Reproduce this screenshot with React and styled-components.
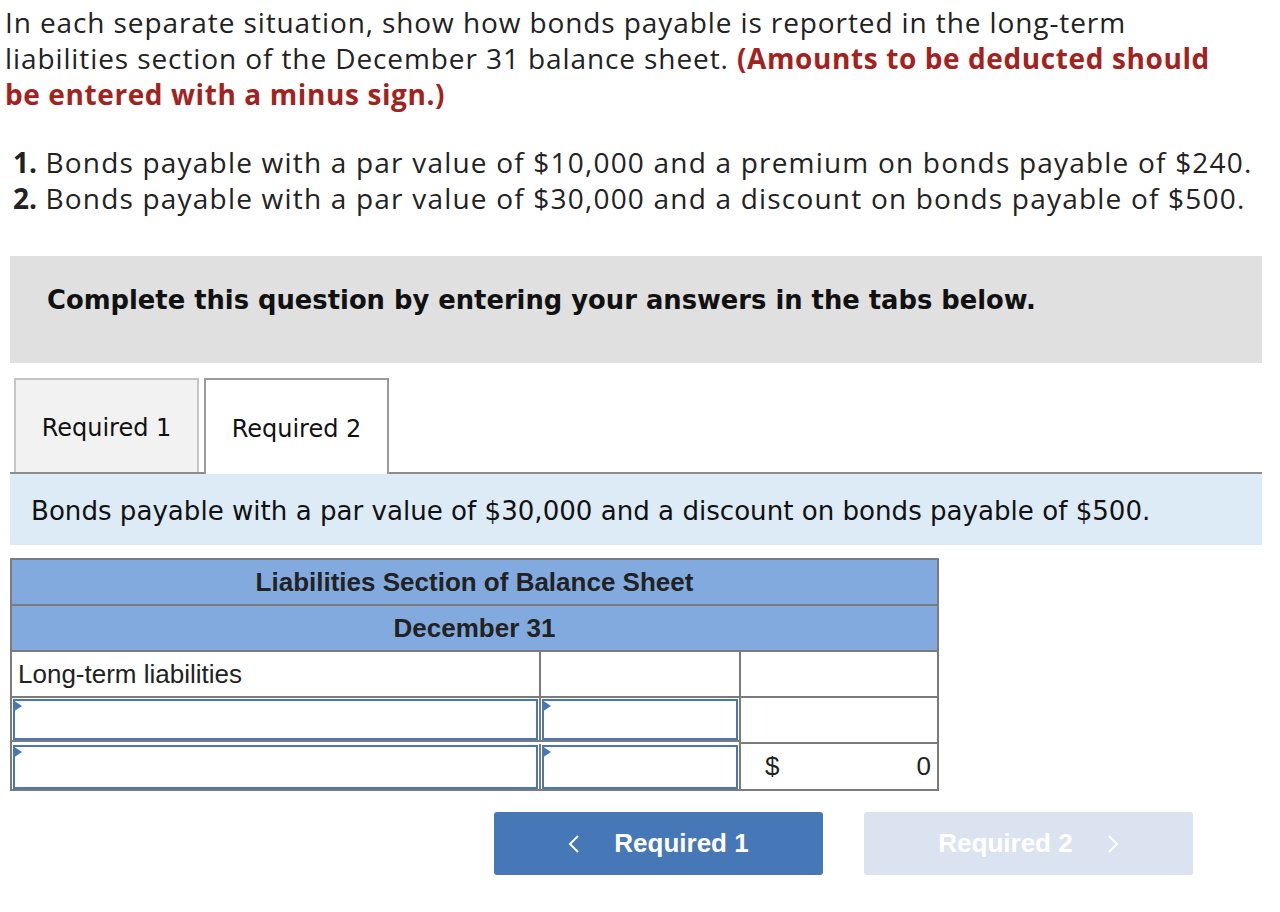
import styled, { createGlobalStyle } from "styled-components";

const GlobalStyle = createGlobalStyle`
  body {
    margin: 0;
    background: #ffffff;
    color: #222222;
  }
`;

const Page = styled.div`
  width: 1252px;
  padding: 4px 0 0 10px;
`;

const Intro = styled.p`
  margin: 0 0 0 -5px;
  font-family: "Open Sans", Lato, sans-serif;
  font-size: 28px;
  line-height: 36px;
  letter-spacing: 0.9px;
  color: #222222;
  strong {
    color: #a3221e;
    letter-spacing: 0.6px;
  }
`;

const Items = styled.ol`
  list-style: none;
  margin: 32px 0 0 0;
  padding: 0;
  font-family: "Open Sans", Lato, sans-serif;
  font-size: 28px;
  line-height: 36px;
  letter-spacing: 1.2px;
  li b {
    display: inline-block;
    width: 27px;
    text-align: right;
    letter-spacing: 0;
  }
`;

const Instruction = styled.div`
  margin-top: 40px;
  height: 107px;
  box-sizing: border-box;
  background: #e0e0e0;
  padding: 28px 0 0 37px;
  font-family: "DejaVu Sans", Verdana, sans-serif;
  font-weight: bold;
  font-size: 25.8px;
  line-height: 32px;
  color: #111111;
`;

const TabBar = styled.div`
  margin-top: 15px;
  display: flex;
  gap: 5px;
  padding-left: 4px;
  border-bottom: 2px solid #8c8c8c;
`;

const Tab = styled.div`
  width: 185px;
  box-sizing: border-box;
  display: flex;
  align-items: center;
  justify-content: center;
  padding-top: 4px;
  font-family: "DejaVu Sans", Verdana, sans-serif;
  font-size: 24px;
  color: #111111;
  background: ${(p) => (p.active ? "#ffffff" : "#f2f2f2")};
  border: 2px solid ${(p) => (p.active ? "#9a9a9a" : "#c4c4c4")};
  border-bottom: none;
  margin-bottom: ${(p) => (p.active ? "-2px" : "0")};
  height: ${(p) => (p.active ? "96px" : "94px")};
`;

const Prompt = styled.div`
  height: 71px;
  background: #ddebf7;
  display: flex;
  align-items: center;
  padding: 3px 0 0 21px;
  box-sizing: border-box;
  font-family: "DejaVu Sans", Verdana, sans-serif;
  font-size: 26.1px;
  color: #111111;
`;

const Sheet = styled.div`
  margin-top: 13px;
  width: 929px;
  box-sizing: border-box;
  border: 2px solid #7b7b7b;
  display: grid;
  grid-template-columns: 527px 200px 198px;
  font-family: "Liberation Sans", Arial, sans-serif;
  font-size: 26px;
  color: #222222;
`;

const HeadCell = styled.div`
  grid-column: 1 / -1;
  height: 44px;
  background: #82aadf;
  display: flex;
  align-items: center;
  justify-content: center;
  font-weight: bold;
  border-bottom: 2px solid #7b7b7b;
`;

const Cell = styled.div`
  display: flex;
  align-items: center;
  justify-content: space-between;
  padding: 0 6px 0 6px;
  border-bottom: ${(p) => (p.last ? "none" : "2px solid #7b7b7b")};
  border-left: ${(p) => (p.first ? "none" : "2px solid #7b7b7b")};
  height: ${(p) => (p.last ? "45px" : "44px")};
`;

const Dollar = styled.span`
  padding-left: 18px;
`;

const InputCell = styled.div`
  position: relative;
  border-bottom: ${(p) => (p.last ? "none" : "2px solid #7b7b7b")};
  border-left: ${(p) => (p.first ? "none" : "2px solid #7b7b7b")};
  height: ${(p) => (p.last ? "45px" : "44px")};
  box-sizing: border-box;
  padding: 1px 1px 0 1px;
  &::before {
    content: "";
    display: block;
    height: 100%;
    box-sizing: border-box;
    border: 2px solid #4a77b4;
  }
  &::after {
    content: "";
    position: absolute;
    left: 1px;
    top: 2px;
    border-left: 9px solid #4a77b4;
    border-top: 6px solid transparent;
    border-bottom: 6px solid transparent;
  }
`;

const Nav = styled.div`
  margin: 21px 0 0 484px;
  display: flex;
  gap: 41px;
`;

const NavButton = styled.button`
  width: 329px;
  height: 63px;
  border: none;
  border-radius: 3px;
  background: ${(p) => (p.disabled ? "#dae3ef" : "#4677b6")};
  color: #ffffff;
  display: flex;
  align-items: center;
  justify-content: center;
  gap: 34px;
  font-family: "Liberation Sans", Arial, sans-serif;
  font-weight: bold;
  font-size: 26px;
  padding: 0;
`;

const Chevron = ({ dir }) => (
  <svg width="12" height="20" viewBox="0 0 12 20" fill="none">
    <polyline
      points={dir === "left" ? "10,2 2,10 10,18" : "2,2 10,10 2,18"}
      stroke="#ffffff"
      strokeWidth="2"
    />
  </svg>
);

export default function App() {
  return (
    <>
      <GlobalStyle />
      <Page>
        <Intro>
          In each separate situation, show how bonds payable is reported in the long-term
          <br />
          liabilities section of the December 31 balance sheet.{" "}
          <strong>(Amounts to be deducted should</strong>
          <br />
          <strong>be entered with a minus sign.)</strong>
        </Intro>
        <Items>
          <li>
            <b>1.</b> Bonds payable with a par value of $10,000 and a premium on bonds payable of $240.
          </li>
          <li>
            <b>2.</b> Bonds payable with a par value of $30,000 and a discount on bonds payable of $500.
          </li>
        </Items>
        <Instruction>Complete this question by entering your answers in the tabs below.</Instruction>
        <TabBar>
          <Tab>Required 1</Tab>
          <Tab active>Required 2</Tab>
        </TabBar>
        <Prompt>Bonds payable with a par value of $30,000 and a discount on bonds payable of $500.</Prompt>
        <Sheet>
          <HeadCell>Liabilities Section of Balance Sheet</HeadCell>
          <HeadCell>December 31</HeadCell>
          <Cell first>Long-term liabilities</Cell>
          <Cell />
          <Cell />
          <InputCell first />
          <InputCell />
          <Cell />
          <InputCell first last />
          <InputCell last />
          <Cell last>
            <Dollar>$</Dollar>
            <span>0</span>
          </Cell>
        </Sheet>
        <Nav>
          <NavButton>
            <Chevron dir="left" />
            Required 1
          </NavButton>
          <NavButton disabled>
            Required 2
            <Chevron dir="right" />
          </NavButton>
        </Nav>
      </Page>
    </>
  );
}
